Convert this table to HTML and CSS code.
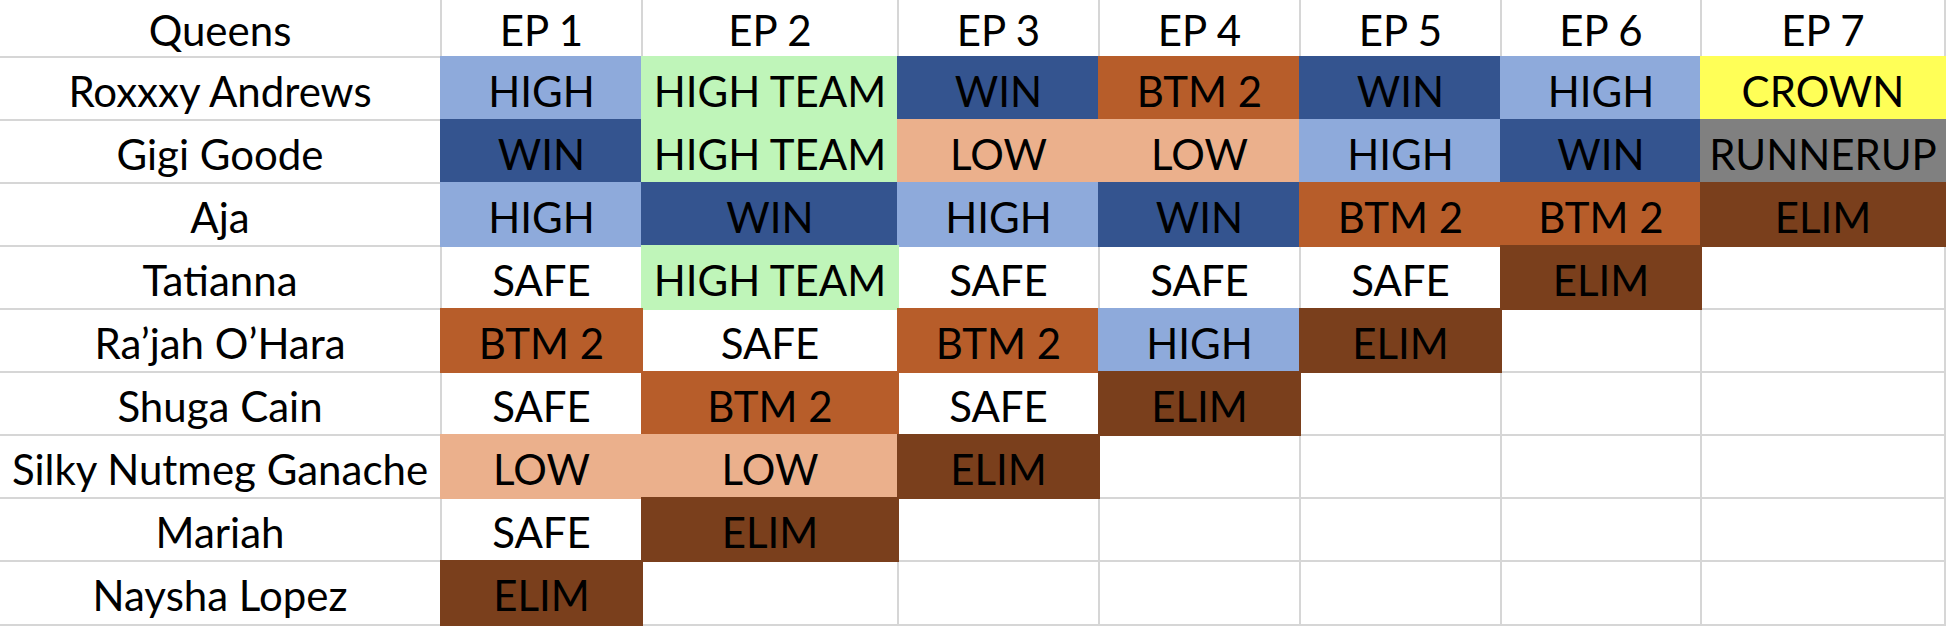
FILE: index.html
```html
<!DOCTYPE html>
<html lang="en">
<head>
<meta charset="utf-8">
<title>Queens</title>
<link rel="stylesheet" href="styles.css">
</head>
<body>
<div class="sheet">
  <div class="cell">Queens</div>
  <div class="cell">EP 1</div>
  <div class="cell">EP 2</div>
  <div class="cell">EP 3</div>
  <div class="cell">EP 4</div>
  <div class="cell">EP 5</div>
  <div class="cell">EP 6</div>
  <div class="cell">EP 7</div>

  <div class="cell">Roxxxy Andrews</div>
  <div class="cell high">HIGH</div>
  <div class="cell team">HIGH TEAM</div>
  <div class="cell win">WIN</div>
  <div class="cell btm">BTM 2</div>
  <div class="cell win">WIN</div>
  <div class="cell high">HIGH</div>
  <div class="cell crown">CROWN</div>

  <div class="cell">Gigi Goode</div>
  <div class="cell win">WIN</div>
  <div class="cell team">HIGH TEAM</div>
  <div class="cell low">LOW</div>
  <div class="cell low">LOW</div>
  <div class="cell high">HIGH</div>
  <div class="cell win">WIN</div>
  <div class="cell runner">RUNNERUP</div>

  <div class="cell">Aja</div>
  <div class="cell high">HIGH</div>
  <div class="cell win">WIN</div>
  <div class="cell high">HIGH</div>
  <div class="cell win">WIN</div>
  <div class="cell btm">BTM 2</div>
  <div class="cell btm">BTM 2</div>
  <div class="cell elim">ELIM</div>

  <div class="cell">Tatianna</div>
  <div class="cell">SAFE</div>
  <div class="cell team">HIGH TEAM</div>
  <div class="cell">SAFE</div>
  <div class="cell">SAFE</div>
  <div class="cell">SAFE</div>
  <div class="cell elim">ELIM</div>
  <div class="cell"></div>

  <div class="cell">Ra’jah O’Hara</div>
  <div class="cell btm">BTM 2</div>
  <div class="cell">SAFE</div>
  <div class="cell btm">BTM 2</div>
  <div class="cell high">HIGH</div>
  <div class="cell elim">ELIM</div>
  <div class="cell"></div>
  <div class="cell"></div>

  <div class="cell">Shuga Cain</div>
  <div class="cell">SAFE</div>
  <div class="cell btm">BTM 2</div>
  <div class="cell">SAFE</div>
  <div class="cell elim">ELIM</div>
  <div class="cell"></div>
  <div class="cell"></div>
  <div class="cell"></div>

  <div class="cell">Silky Nutmeg Ganache</div>
  <div class="cell low">LOW</div>
  <div class="cell low">LOW</div>
  <div class="cell elim">ELIM</div>
  <div class="cell"></div>
  <div class="cell"></div>
  <div class="cell"></div>
  <div class="cell"></div>

  <div class="cell">Mariah</div>
  <div class="cell">SAFE</div>
  <div class="cell elim">ELIM</div>
  <div class="cell"></div>
  <div class="cell"></div>
  <div class="cell"></div>
  <div class="cell"></div>
  <div class="cell"></div>

  <div class="cell">Naysha Lopez</div>
  <div class="cell elim">ELIM</div>
  <div class="cell"></div>
  <div class="cell"></div>
  <div class="cell"></div>
  <div class="cell"></div>
  <div class="cell"></div>
  <div class="cell"></div>
</div>
</body>
</html>
```

FILE: styles.css
```css
html, body {
  margin: 0;
  padding: 0;
  background: #ffffff;
}

.sheet {
  display: grid;
  grid-template-columns: 442px 201px 256px 201px 201px 201px 200px 244px;
  grid-template-rows: 58px repeat(8, 63px) 64px;
  width: 1946px;
  font-family: "Lato", "Open Sans", sans-serif;
  font-size: 42px;
  color: #000000;
}

.cell {
  box-sizing: border-box;
  display: flex;
  align-items: center;
  justify-content: center;
  padding-top: 4px;
  white-space: nowrap;
  border-right: 2px solid #d6d6d6;
  border-bottom: 2px solid #d6d6d6;
  background: #ffffff;
}

.high   { --fill: #8eaadb; }
.win    { --fill: #34548f; }
.team   { --fill: #bff5b9; }
.btm    { --fill: #b75d2a; }
.low    { --fill: #ebb08c; }
.elim   { --fill: #7a3f1c; }
.crown  { --fill: #ffff57; }
.runner { --fill: #808080; }

.high, .win, .team, .btm, .low, .elim, .crown, .runner {
  background: var(--fill);
  border-color: var(--fill);
  box-shadow: -2px 0 0 var(--fill), 0 -2px 0 var(--fill), -2px -2px 0 var(--fill);
}
```
